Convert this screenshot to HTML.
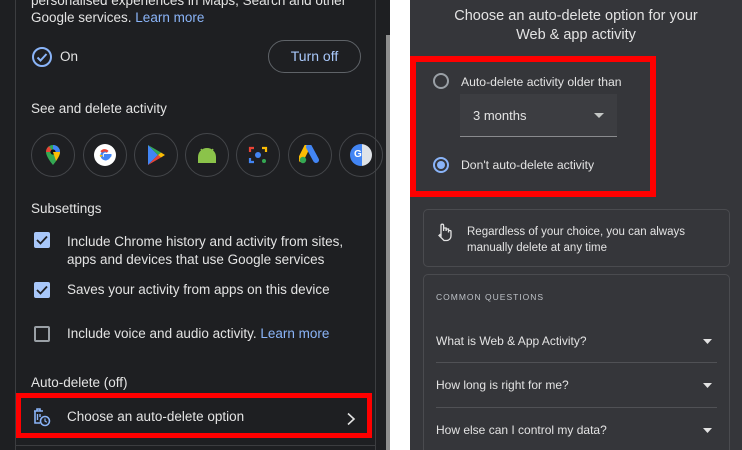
<!DOCTYPE html>
<html><head><meta charset="utf-8"><style>
*{margin:0;padding:0;box-sizing:border-box}
html{width:742px;height:450px;overflow:hidden}
body{width:742px;height:450px;overflow:hidden;background:#fff;font-family:"Liberation Sans",Roboto,sans-serif;position:relative}
.a{position:absolute;white-space:nowrap}
#L{position:absolute;left:0;top:0;width:390px;height:450px;background:#1e1f22;overflow:hidden}
#R{position:absolute;left:410px;top:0;width:332px;height:450px;background:#35363a;overflow:hidden}
.t{color:#e3e3e3;font-size:13px}
.lk{color:#8ab4f8}
.circ{position:absolute;width:44px;height:44px;border:1px solid #44464a;border-radius:50%;display:flex;align-items:center;justify-content:center}
.cb{position:absolute;width:16px;height:16px;border-radius:2px;background:#a8c7fa;display:flex;align-items:center;justify-content:center}
</style></head><body>
<div id="L">
 <div class="a" style="left:15px;top:0;width:1px;height:450px;background:#3c3d40"></div>
 <div class="a" style="left:375px;top:0;width:1px;height:450px;background:#3c3d40"></div>
 <div class="a" style="left:386px;top:35px;width:4px;height:415px;background:#8e8e8e"></div>
 <div class="a" style="left:15px;top:445px;width:361px;height:1px;background:#3c3d40"></div>
 <div class="a t" style="left:31px;top:-7px;font-size:13.5px">personalised experiences in Maps, Search and other</div>
 <div class="a t" style="left:31px;top:10px;font-size:13.5px">Google services. <span class="lk">Learn more</span></div>
 <svg class="a" style="left:31px;top:46px" width="22" height="22" viewBox="0 0 22 22"><circle cx="11" cy="11" r="9" fill="none" stroke="#8ab4f8" stroke-width="2"/><path d="M6.5 11.5l3 3 6-6.5" fill="none" stroke="#8ab4f8" stroke-width="2"/></svg>
 <div class="a t" style="left:60px;top:49px;font-size:13.5px">On</div>
 <div class="a" style="left:268px;top:40px;width:93px;height:33px;border:1px solid #5f6368;border-radius:17px;color:#a8c7fa;font-size:14px;text-align:center;line-height:31px">Turn off</div>
 <div class="a t" style="left:31px;top:101px;font-size:13.5px">See and delete activity</div>
 <div class="circ" style="left:31px;top:133px"><svg width="16" height="22" viewBox="0 0 16 22"><path d="M8 1a7 7 0 0 0-7 7c0 5 7 13 7 13s7-8 7-13a7 7 0 0 0-7-7z" fill="#34a853"/><path d="M8 1a7 7 0 0 1 7 7H8z" fill="#4285f4"/><path d="M1 8a7 7 0 0 1 3-5.7L8 8z" fill="#ea4335"/><circle cx="8" cy="8" r="2.6" fill="#111"/><path d="M8 8l7 0c0 3-2 6-4 9z" fill="#fbbc04"/></svg></div>
 <div class="circ" style="left:83px;top:133px"><div style="width:22px;height:22px;border-radius:50%;background:#fff;display:flex;align-items:center;justify-content:center"><svg width="16" height="16" viewBox="0 0 16 16"><path d="M14.5 8.2H8v2.4h3.8A4 4 0 1 1 10.6 4.8" fill="none" stroke="#4285f4" stroke-width="2.4"/><path d="M4.3 5A4 4 0 0 1 10.6 4.8" fill="none" stroke="#ea4335" stroke-width="2.4"/><path d="M4 8a4 4 0 0 0 .3 1.6" fill="none" stroke="#fbbc04" stroke-width="2.4"/></svg></div></div>
 <div class="circ" style="left:134px;top:133px"><svg width="20" height="22" viewBox="0 0 20 22"><path d="M2 1l10 10L2 21z" fill="#4285f4"/><path d="M2 1l13 7.5-3 2.5z" fill="#34a853"/><path d="M2 21l13-7.5-3-2.5z" fill="#ea4335"/><path d="M15 8.5l4 2.5-4 2.5-3-2.5z" fill="#fbbc04"/></svg></div>
 <div class="circ" style="left:185px;top:133px"><svg width="22" height="18" viewBox="0 0 22 18"><path d="M2 17V11a9 9 0 0 1 18 0v6z" fill="#8bc34a"/><path d="M5 3l2 3M17 3l-2 3" stroke="#8bc34a" stroke-width="1.5"/></svg></div>
 <div class="circ" style="left:236px;top:133px"><svg width="20" height="20" viewBox="0 0 20 20"><path d="M2 7V3h4" fill="none" stroke="#ea4335" stroke-width="2.2"/><path d="M14 3h4v4" fill="none" stroke="#fbbc04" stroke-width="2.2"/><path d="M2 13v4h4" fill="none" stroke="#4285f4" stroke-width="2.2"/><circle cx="10" cy="10" r="3" fill="#4285f4"/><circle cx="16" cy="16" r="2" fill="#34a853"/></svg></div>
 <div class="circ" style="left:288px;top:133px"><svg width="22" height="20" viewBox="0 0 22 20"><path d="M8 2l-6 12" stroke="#fbbc04" stroke-width="6" stroke-linecap="round"/><path d="M10 2l7 13" stroke="#4285f4" stroke-width="6" stroke-linecap="round"/><circle cx="4" cy="15" r="3.2" fill="#34a853"/></svg></div>
 <div class="circ" style="left:339px;top:133px;width:44px;justify-content:flex-start;padding-left:10px"><div style="width:22px;height:22px;border-radius:50%;background:linear-gradient(90deg,#4285f4 55%,#dfe3e8 55%);color:#fff;font-size:10px;font-weight:bold;line-height:22px;padding-left:4px">G</div></div>
 <div class="a t" style="left:31px;top:201px;font-size:13.5px">Subsettings</div>
 <div class="cb" style="left:34px;top:232px"><svg width="12" height="10"><path d="M1 5l3.5 3.5L11 1.5" fill="none" stroke="#1e1f22" stroke-width="1.8"/></svg></div>
 <div class="a t" style="left:67px;top:233px;font-size:13.5px;line-height:18px">Include Chrome history and activity from sites,<br>apps and devices that use Google services</div>
 <div class="cb" style="left:34px;top:282px"><svg width="12" height="10"><path d="M1 5l3.5 3.5L11 1.5" fill="none" stroke="#1e1f22" stroke-width="1.8"/></svg></div>
 <div class="a t" style="left:67px;top:282px;font-size:13.5px">Saves your activity from apps on this device</div>
 <div class="a" style="left:34px;top:326px;width:16px;height:16px;border:2px solid #9aa0a6;border-radius:2px"></div>
 <div class="a t" style="left:67px;top:326px;font-size:13.5px">Include voice and audio activity. <span class="lk">Learn more</span></div>
 <div class="a t" style="left:31px;top:375px;font-size:13.5px">Auto-delete (off)</div>
 <div class="a" style="left:16px;top:393px;width:356px;height:45px;border:5px solid #f00"></div>
 <svg class="a" style="left:31px;top:407px" width="20" height="20" viewBox="0 0 20 20"><path d="M3 4h9M6 4V2h3v2M4 4v12h5" fill="none" stroke="#8ab4f8" stroke-width="1.6"/><path d="M6.5 7v6M9 7v3" stroke="#8ab4f8" stroke-width="1.4"/><circle cx="14" cy="14" r="4.5" fill="none" stroke="#8ab4f8" stroke-width="1.6"/><path d="M14 11.5V14l1.8 1.2" fill="none" stroke="#8ab4f8" stroke-width="1.2"/></svg>
 <div class="a t" style="left:67px;top:409px;font-size:13.5px">Choose an auto-delete option</div>
 <svg class="a" style="left:346px;top:412px" width="10" height="14"><path d="M2 1.5l6 5.5-6 5.5" fill="none" stroke="#e3e3e3" stroke-width="1.6"/></svg>
</div>
<div id="R">
 <div class="a t" style="left:0;width:332px;text-align:center;top:7px;font-size:14.5px;line-height:19px;white-space:normal">Choose an auto-delete option for your<br>Web &amp; app activity</div>
 <div class="a" style="left:0;top:56px;width:246px;height:141px;border:6px solid #f00"></div>
 <div class="a" style="left:23px;top:73px;width:16px;height:16px;border:2px solid #9aa0a6;border-radius:50%"></div>
 <div class="a t" style="left:51px;top:75px;font-size:12.2px">Auto-delete activity older than</div>
 <div class="a" style="left:50px;top:94px;width:157px;height:43px;background:#3c3d41;border-bottom:1px solid #8a8b8e"></div>
 <div class="a t" style="left:63px;top:108px;font-size:13px">3 months</div>
 <svg class="a" style="left:184px;top:113px" width="10" height="6"><path d="M0 0h10L5 5z" fill="#c4c7c5"/></svg>
 <div class="a" style="left:23px;top:157px;width:16px;height:16px;border:2px solid #8ab4f8;border-radius:50%"><div style="margin:2px;width:8px;height:8px;border-radius:50%;background:#8ab4f8"></div></div>
 <div class="a t" style="left:51px;top:158px;font-size:12.2px">Don't auto-delete activity</div>
 <div class="a" style="left:13px;top:209px;width:307px;height:58px;border:1px solid #4a4b4f;border-radius:5px"></div>
 <svg class="a" style="left:26px;top:222px" width="18" height="20" viewBox="0 0 18 20"><path d="M5 9V3.5a1.3 1.3 0 0 1 2.6 0V9M7.6 6h2.5v3M10.1 7h2.4v3.5M12.5 8.5h1.5a1 1 0 0 1 1 1V14a4.5 4.5 0 0 1-4.5 4.5H8L3 13.5l1-1L5 13.5V9" fill="none" stroke="#e3e3e3" stroke-width="1.3"/></svg>
 <div class="a t" style="left:57px;top:224px;font-size:11.5px;line-height:16px">Regardless of your choice, you can always<br>manually delete at any time</div>
 <div class="a" style="left:13px;top:274px;width:307px;height:190px;border:1px solid #4a4b4f;border-radius:5px"></div>
 <div class="a" style="left:26px;top:292px;font-size:8.5px;letter-spacing:1px;color:#bdc1c6">COMMON QUESTIONS</div>
 <div class="a t" style="left:26px;top:334px;font-size:12px">What is Web &amp; App Activity?</div>
 <svg class="a" style="left:293px;top:339px" width="9" height="5"><path d="M0 0h9L4.5 5z" fill="#e3e3e3"/></svg>
 <div class="a" style="left:26px;top:362px;width:281px;height:1px;background:#505155"></div>
 <div class="a t" style="left:26px;top:378px;font-size:12px">How long is right for me?</div>
 <svg class="a" style="left:293px;top:383px" width="9" height="5"><path d="M0 0h9L4.5 5z" fill="#e3e3e3"/></svg>
 <div class="a" style="left:26px;top:407px;width:281px;height:1px;background:#505155"></div>
 <div class="a t" style="left:26px;top:423px;font-size:12px">How else can I control my data?</div>
 <svg class="a" style="left:293px;top:428px" width="9" height="5"><path d="M0 0h9L4.5 5z" fill="#e3e3e3"/></svg>
</div>
</body></html>
